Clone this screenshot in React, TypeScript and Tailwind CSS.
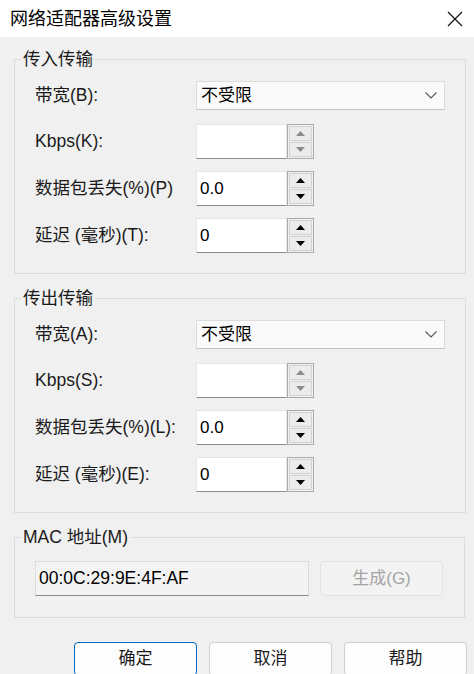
import React from "react";

const FONT = { fontFamily: '"Liberation Sans", "Noto Sans CJK SC", sans-serif' };

function Tri({ up, disabled }: { up: boolean; disabled?: boolean }) {
  const c = disabled ? "#8a8a8a" : "#000";
  return (
    <svg width="9" height="5" viewBox="0 0 9 5">
      {up ? <path d="M0 5 L4.5 0 L9 5 Z" fill={c} /> : <path d="M0 0 L9 0 L4.5 5 Z" fill={c} />}
    </svg>
  );
}

function Spin({ value, disabled }: { value: string; disabled?: boolean }) {
  return (
    <div className="flex h-[35px]">
      <div className="w-[91px] h-full bg-white border border-[#e6e6e6] border-b-[#8c8c8c] flex items-center pl-[3px] text-[17px] text-black">
        {value}
      </div>
      <div className="w-[27px] h-full border border-[#ababab] bg-[#f0f0f0] p-[1px] flex flex-col gap-[1px]">
        <div className="flex-1 border border-[#d2d2d2] bg-[#ececec] flex items-center justify-center">
          <Tri up disabled={disabled} />
        </div>
        <div className="flex-1 border border-[#d2d2d2] bg-[#ececec] flex items-center justify-center">
          <Tri up={false} disabled={disabled} />
        </div>
      </div>
    </div>
  );
}

function Combo() {
  return (
    <div className="w-[249px] h-[29px] bg-[#fafafa] border border-[#dcdcdc] border-b-[#c4c4c4] flex items-center justify-between pl-[4px] pr-[7px] text-[17px] text-black">
      <span>不受限</span>
      <svg width="12" height="7" viewBox="0 0 12 7">
        <path d="M0.5 0.5 L6 6 L11.5 0.5" fill="none" stroke="#555" strokeWidth="1.1" />
      </svg>
    </div>
  );
}

function Row({ label, children, className }: { label: string; children: React.ReactNode; className?: string }) {
  return (
    <div className={"flex items-center " + (className ?? "")}>
      <div className="w-[161px] text-[17.5px] text-[#1a1a1a] whitespace-nowrap">{label}</div>
      {children}
    </div>
  );
}

function Group({
  title,
  l1,
  l2,
  l3,
  l4,
  className,
}: {
  title: string;
  l1: string;
  l2: string;
  l3: string;
  l4: string;
  className?: string;
}) {
  return (
    <fieldset className={"w-[451px] ml-[14px] border border-[#dcdcdc] pl-[20px] pr-[20px] pb-[20px] " + (className ?? "")}>
      <legend className="ml-[-14px] px-[2px] text-[17.5px] leading-[20px] text-[#1a1a1a]">{title}</legend>
      <Row label={l1} className="mt-[12px]">
        <Combo />
      </Row>
      <Row label={l2} className="mt-[14px]">
        <Spin value="" disabled />
      </Row>
      <Row label={l3} className="mt-[12px]">
        <Spin value="0.0" />
      </Row>
      <Row label={l4} className="mt-[12px]">
        <Spin value="0" />
      </Row>
    </fieldset>
  );
}

export default function App() {
  return (
    <div className="w-[474px] h-[674px] overflow-hidden bg-[#f0f0f0] flex flex-col" style={FONT}>
      <div className="h-[37px] bg-white flex items-center justify-between pl-[10px] pr-[11px] shrink-0">
        <span className="text-[18px] text-black leading-none">网络适配器高级设置</span>
        <svg width="16" height="16" viewBox="0 0 16 16">
          <path d="M1 1 L15 15 M15 1 L1 15" stroke="#111" strokeWidth="1.2" />
        </svg>
      </div>
      <div className="pt-[12px] flex flex-col">
        <Group title="传入传输" l1="带宽(B):" l2="Kbps(K):" l3="数据包丢失(%)(P)" l4="延迟 (毫秒)(T):" />
        <Group
          title="传出传输"
          l1="带宽(A):"
          l2="Kbps(S):"
          l3="数据包丢失(%)(L):"
          l4="延迟 (毫秒)(E):"
          className="mt-[14px]"
        />
        <fieldset className="w-[451px] ml-[14px] mt-[14px] border border-[#dcdcdc] pl-[20px] pr-[21px] pb-[21px]">
          <legend className="ml-[-14px] px-[2px] text-[17.5px] leading-[20px] text-[#1a1a1a]">MAC 地址(M)</legend>
          <div className="mt-[14px] flex items-center justify-between">
            <div className="w-[274px] h-[35px] bg-[#f3f3f3] border border-[#dcdcdc] border-b-[#8a8a8a] flex items-center pl-[3px] text-[17.5px] text-black">
              00:0C:29:9E:4F:AF
            </div>
            <div className="w-[123px] h-[35px] rounded-[4px] bg-[#f3f3f3] border border-[#e3e3e3] flex items-center justify-center text-[17px] text-[#a3a3a3]">
              生成(G)
            </div>
          </div>
        </fieldset>
        <div className="mt-[24px] flex justify-end gap-[12px] pr-[7px]">
          <div className="w-[123px] h-[34px] rounded-[4px] bg-[#fdfdfd] border border-[#0067c0] flex items-center justify-center text-[17px] text-[#1a1a1a]">
            确定
          </div>
          <div className="w-[123px] h-[34px] rounded-[4px] bg-[#fdfdfd] border border-[#d0d0d0] flex items-center justify-center text-[17px] text-[#1a1a1a]">
            取消
          </div>
          <div className="w-[123px] h-[34px] rounded-[4px] bg-[#fdfdfd] border border-[#d0d0d0] flex items-center justify-center text-[17px] text-[#1a1a1a]">
            帮助
          </div>
        </div>
      </div>
    </div>
  );
}
